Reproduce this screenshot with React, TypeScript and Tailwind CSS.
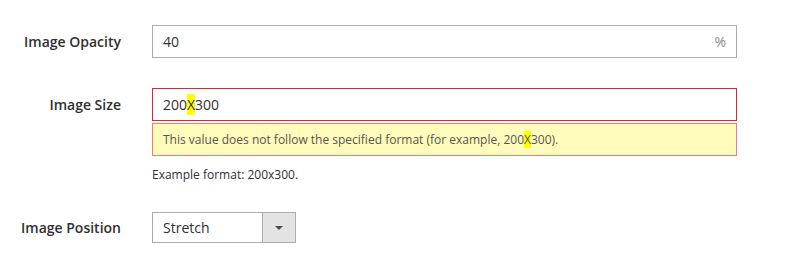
import React from "react";

const font = { fontFamily: '"Open Sans", "Liberation Sans", sans-serif' };

function Hl({ children }: { children: React.ReactNode }) {
  return <span className="bg-[#ffff00]">{children}</span>;
}

export default function App() {
  return (
    <div className="w-[785px] h-[267px] bg-white pt-[25px] text-[#303030]" style={font}>
      {/* Image Opacity */}
      <div className="flex items-center">
        <div className="w-[121px] text-right text-[14px] font-semibold">Image Opacity</div>
        <div className="ml-[31px] w-[585px] h-[33px] border border-[#adadad] flex items-center justify-between pl-[10px] pr-[10px] text-[14px]">
          <span>40</span>
          <span className="text-[#8a8a8a]">%</span>
        </div>
      </div>

      {/* Image Size */}
      <div className="flex items-start mt-[30px]">
        <div className="w-[121px] h-[33px] flex items-center justify-end text-[14px] font-semibold">Image Size</div>
        <div className="ml-[31px] w-[585px]">
          <div className="h-[33px] border border-[#e22626] flex items-center pl-[10px] text-[14px]">
            200<Hl>X</Hl>300
          </div>
          <div className="mt-[2px] h-[33px] border border-[#ee7d7d] bg-[#fffbbb] flex items-center pl-[10px] text-[12px] text-[#555]">
            <span>
              This value does not follow the specified format (for example, 200<Hl>X</Hl>300).
            </span>
          </div>
          <div className="mt-[10px] text-[12px] leading-[17px]">Example format: 200x300.</div>
        </div>
      </div>

      {/* Image Position */}
      <div className="flex items-center mt-[29px]">
        <div className="w-[121px] text-right text-[14px] font-semibold">Image Position</div>
        <div className="ml-[31px] w-[144px] h-[31px] border border-[#adadad] flex">
          <div className="flex-1 flex items-center pl-[10px] text-[14px]">Stretch</div>
          <div className="w-[33px] bg-[#e3e3e3] border-l border-[#adadad] flex items-center justify-center">
            <svg width="8" height="4" viewBox="0 0 8 4">
              <polygon points="0,0 8,0 4,4" fill="#514943" />
            </svg>
          </div>
        </div>
      </div>
    </div>
  );
}
